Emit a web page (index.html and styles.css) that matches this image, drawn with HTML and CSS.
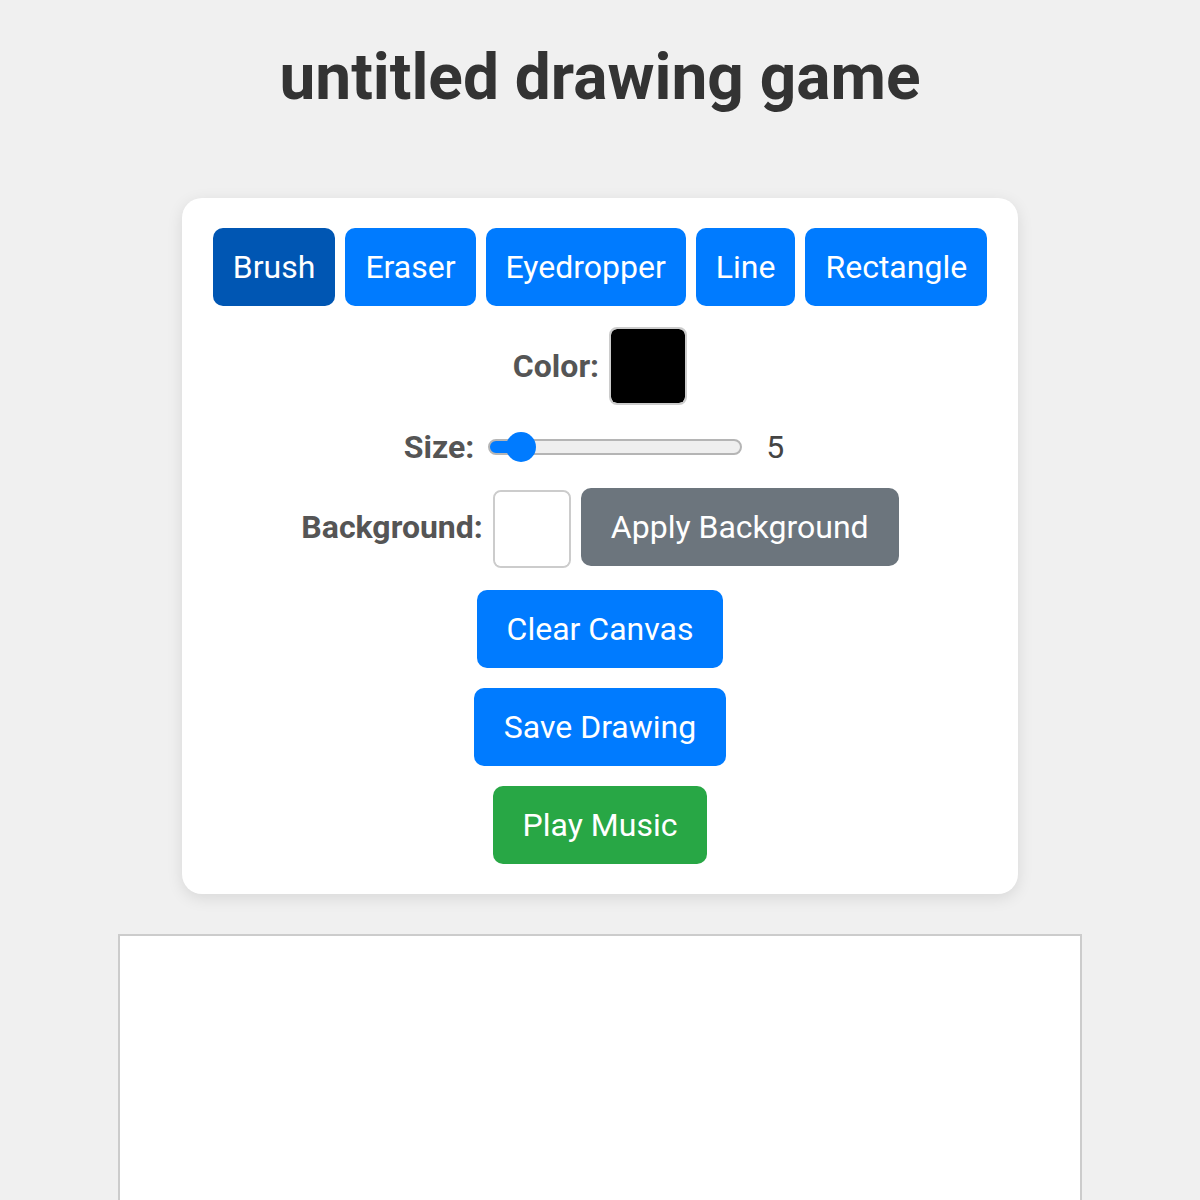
FILE: index.html
```html
<!DOCTYPE html>
<html lang="en">
<head>
<meta charset="utf-8">
<title>untitled drawing game</title>
<link rel="stylesheet" href="styles.css">
</head>
<body>
  <h1 class="title">untitled drawing game</h1>
  <div class="card">
    <div class="tools">
      <button class="btn btn-primary active">Brush</button>
      <button class="btn btn-primary">Eraser</button>
      <button class="btn btn-primary">Eyedropper</button>
      <button class="btn btn-primary">Line</button>
      <button class="btn btn-primary">Rectangle</button>
    </div>
    <div class="row row-color">
      <label class="label" for="color">Color:</label>
      <input class="swatch" id="color" type="color" value="#000000">
    </div>
    <div class="row">
      <label class="label" for="size">Size:</label>
      <input class="slider" id="size" type="range" min="1" max="50" value="5">
      <span class="value">5</span>
    </div>
    <div class="row row-bg">
      <label class="label" for="bg">Background:</label>
      <input class="swatch" id="bg" type="color" value="#ffffff">
      <button class="btn btn-wide btn-secondary">Apply Background</button>
    </div>
    <div class="row">
      <button class="btn btn-wide btn-primary">Clear Canvas</button>
    </div>
    <div class="row">
      <button class="btn btn-wide btn-primary">Save Drawing</button>
    </div>
    <div class="row">
      <button class="btn btn-wide btn-success">Play Music</button>
    </div>
  </div>
  <canvas class="canvas" width="960" height="600"></canvas>
</body>
</html>
```

FILE: styles.css
```css
* { box-sizing: border-box; }

html, body {
  margin: 0;
  padding: 0;
  background: #f0f0f0;
  font-family: Roboto, "Liberation Sans", Arial, sans-serif;
  color: #333;
}

body {
  padding: 40px 0 0;
}

.title {
  margin: 0 0 82px;
  text-align: center;
  font-size: 64px;
  line-height: 76px;
  font-weight: 700;
  color: #333;
}

.card {
  width: 836px;
  margin: 0 auto;
  background: #fff;
  border-radius: 20px;
  padding: 30px;
  box-shadow: 0 4px 16px rgba(0, 0, 0, 0.1);
  display: flex;
  flex-direction: column;
  gap: 20px;
}

.tools {
  display: flex;
  justify-content: center;
  gap: 10px;
}

.row {
  display: flex;
  justify-content: center;
  align-items: center;
  gap: 10px;
}

.row-color {
  min-height: 80px;
}

.row-bg {
  height: 82px;
  align-items: flex-start;
}
.row-bg .label {
  line-height: 78px;
}
.row-bg .swatch {
  margin-top: 2px;
}

.btn {
  font-family: inherit;
  font-size: 32px;
  line-height: 38px;
  padding: 20px 20px;
  border: none;
  border-radius: 10px;
  color: #fff;
  cursor: pointer;
}

.btn-wide {
  padding: 20px 30px;
}

.btn-primary { background: #007bff; }
.btn-primary.active { background: #0056b3; }
.btn-secondary { background: #6c757d; }
.btn-success { background: #28a745; }

.label {
  font-size: 32px;
  font-weight: 700;
  color: #555;
}

.swatch {
  -webkit-appearance: none;
  appearance: none;
  width: 78px;
  height: 78px;
  padding: 0;
  border: 2px solid #ccc;
  border-radius: 8px;
  background: #fff;
  cursor: pointer;
}
.swatch::-webkit-color-swatch-wrapper { padding: 0; }
.swatch::-webkit-color-swatch {
  border: none;
  border-radius: 6px;
}

.slider {
  -webkit-appearance: none;
  appearance: none;
  width: 254px;
  height: 42px;
  margin: 0 4px;
  background: transparent;
}
.slider::-webkit-slider-runnable-track {
  height: 16px;
  border-radius: 8px;
  border: 2px solid #b5b5b5;
  background: linear-gradient(to right, #007bff 0, #007bff 30px, #efefef 30px, #efefef 100%);
}
.slider::-webkit-slider-thumb {
  -webkit-appearance: none;
  width: 30px;
  height: 30px;
  margin-top: -9px;
  border-radius: 50%;
  background: #007bff;
  border: none;
  margin-left: -2px;
}

.value {
  font-size: 32px;
  color: #444;
  min-width: 40px;
  padding-left: 10px;
}

.canvas {
  display: block;
  margin: 40px auto 0;
  width: 964px;
  height: 604px;
  border: 2px solid #ccc;
  background: #fff;
}
```
